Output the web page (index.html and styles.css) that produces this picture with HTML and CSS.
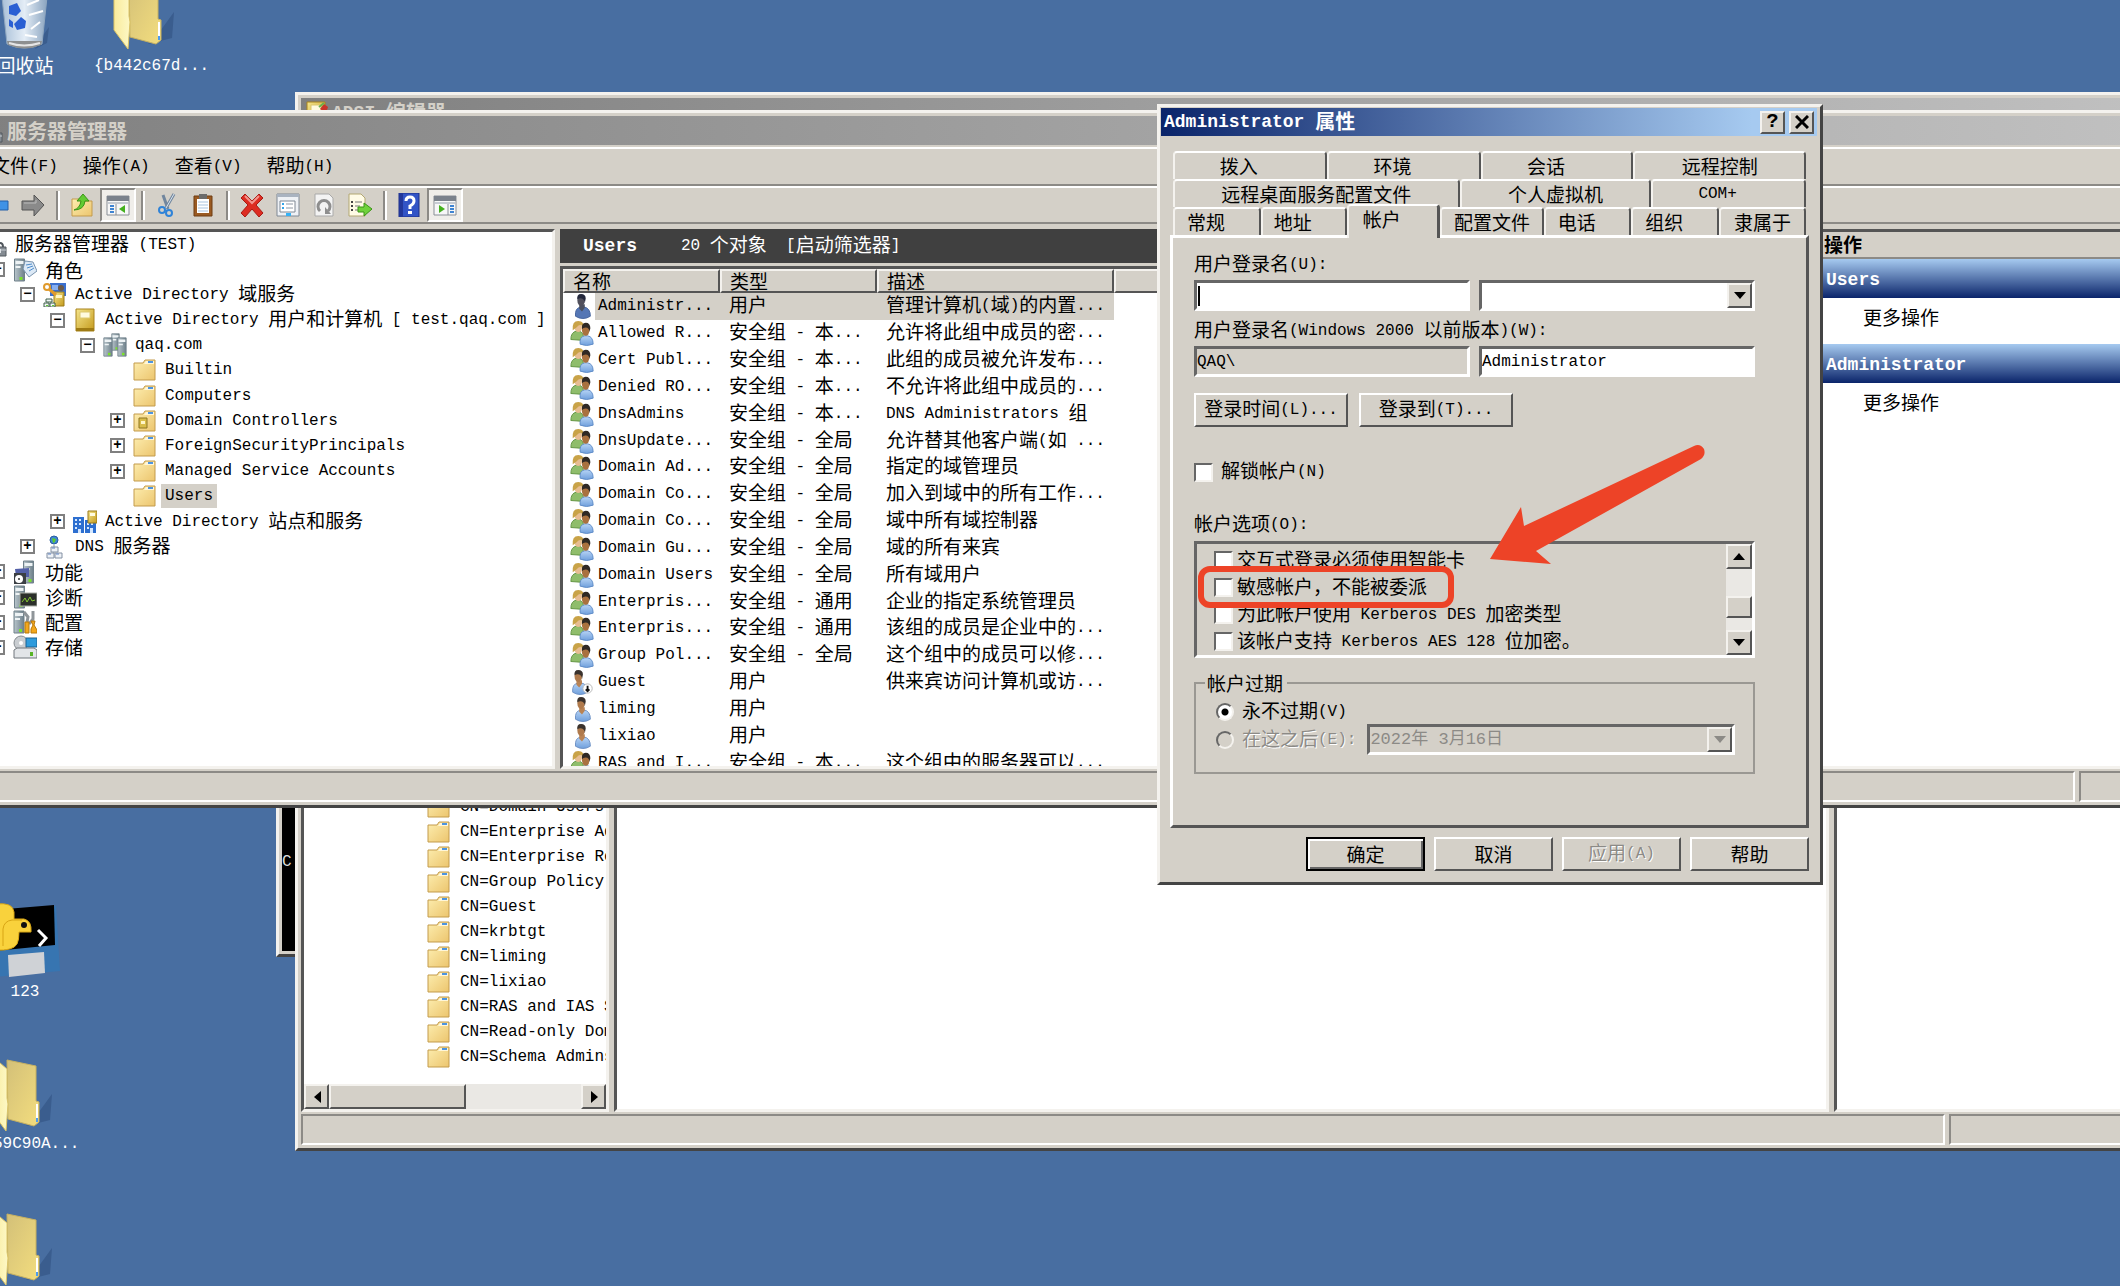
FILE: index.html
```html
<!DOCTYPE html>
<html lang="zh-CN">
<head>
	<meta charset="utf-8">
	<title>服务器管理器</title>
	<link rel="stylesheet" href="styles.css">
</head>
<body>

<!-- shared icons -->
<svg class="sprite" width="0" height="0">
	<defs>
		<linearGradient id="g-folder" x1="0" y1="0" x2="1" y2="1"><stop offset="0" stop-color="#fdeeb0"/><stop offset="1" stop-color="#ecc56e"/></linearGradient>
		<linearGradient id="g-big" x1="0" y1="0" x2="1" y2="0"><stop offset="0" stop-color="#f9eb9c"/><stop offset="1" stop-color="#fdf8c6"/></linearGradient>
		<linearGradient id="g-back" x1="0" y1="0" x2="1" y2="1"><stop offset="0" stop-color="#d3c078"/><stop offset="1" stop-color="#f3dd7e"/></linearGradient>
		<linearGradient id="g-tower" x1="0" y1="0" x2="1" y2="0"><stop offset="0" stop-color="#b9c6cc"/><stop offset="1" stop-color="#6d7f89"/></linearGradient>
		<linearGradient id="g-book" x1="0" y1="0" x2="1" y2="1"><stop offset="0" stop-color="#f5e58c"/><stop offset="1" stop-color="#c49a1c"/></linearGradient>
		<linearGradient id="g-blue" x1="0" y1="0" x2="0" y2="1"><stop offset="0" stop-color="#b7d4f5"/><stop offset="1" stop-color="#6f9fdc"/></linearGradient>
		<linearGradient id="g-glass" x1="0" y1="0" x2="1" y2="0"><stop offset="0" stop-color="#a9c0d8"/><stop offset="0.5" stop-color="#e4edf6"/><stop offset="1" stop-color="#8aa4c0"/></linearGradient>
	</defs>
	<symbol id="folder" viewBox="0 0 24 24">
		<path d="M1 5h9l2-3h10v20H1z" fill="url(#g-folder)" stroke="#c39b4c"/>
		<path d="M11 6l2-3h8v3z" fill="#fff6d8"/><path d="M15 3h5v2h-5z" fill="#4d94e0"/>
	</symbol>
	<symbol id="folder-dc" viewBox="0 0 24 24">
		<use href="#folder"/><path d="M6 9h8v10H6z" fill="#d9bd4a" stroke="#8f7623"/><path d="M8 12h4v3H8z" fill="#fff6c6"/>
	</symbol>
	<symbol id="tower" viewBox="0 0 12 24">
		<path d="M1 1h10v22H1z" fill="url(#g-tower)" stroke="#70818a"/><path d="M2 3h8v3H2zM2 8h5v2H2z" fill="#eef3f5"/><path d="M6 19h3v3H6z" fill="#7be22a"/>
	</symbol>
	<symbol id="manager" viewBox="0 0 24 24">
		<use href="#tower" x="2" y="0" width="12" height="22"/><path d="M14 14q0-4 3-4t3 4" fill="none" stroke="#4f555b" stroke-width="2"/><path d="M9 14h14v9H9z" fill="#848b92" stroke="#53595f"/><path d="M9 17h14" stroke="#c9ced3"/><path d="M15 16h3v4h-3z" fill="#dfe3e6"/>
	</symbol>
	<symbol id="roles" viewBox="0 0 24 24">
		<use href="#tower" x="0" y="0" width="13" height="24"/>
		<path d="M12 3l8 1 4 9-8 6-6-8z" fill="#dce9f6" stroke="#7993ad"/><path d="M13 7l6-1M14 10l6-2M16 13l5-3" stroke="#4d8ccc"/>
	</symbol>
	<symbol id="adds" viewBox="0 0 24 24">
		<path d="M7 0h16v13H7z" fill="#3b70cf"/><path d="M9 2h6v5H9z" fill="#86aef0"/><circle cx="18" cy="5" r="3" fill="#6d5b4a"/>
		<path d="M11 9h10v14H11z" fill="url(#g-book)" stroke="#9b7a19"/><path d="M13 12h6v3h-6z" fill="#fff6c6"/>
		<circle cx="4" cy="4" r="3" fill="none" stroke="#e09a2c" stroke-width="2"/><path d="M6 6l7 6" stroke="#e09a2c" stroke-width="3"/>
		<path d="M3 16h6v3H3zM1 20h5v4H1zM7 20h5v4H7z" fill="#f1f5f5" stroke="#3d5f49"/><path d="M3 22h2v1H3zM9 22h2v1H9z" fill="#5ecb2d"/>
	</symbol>
	<symbol id="book" viewBox="0 0 24 24">
		<path d="M3 1h18v22H3z" fill="url(#g-book)" stroke="#a8831d"/><path d="M3 20h18v3H3z" fill="#9f7b13"/><path d="M7 4h10v6H7z" fill="#fffbe0" stroke="#dcc870"/>
	</symbol>
	<symbol id="adsi" viewBox="0 0 24 24">
		<use href="#book"/><path d="M16 8l4-5 4 3-2 6z" fill="#c9352b"/><path d="M15 6l5-4" stroke="#6ab04c" stroke-width="2"/>
	</symbol>
	<symbol id="domain" viewBox="0 0 24 24">
		<use href="#tower" x="8" y="0" width="9" height="18"/><use href="#tower" x="0" y="4" width="10" height="20"/><use href="#tower" x="14" y="4" width="10" height="20"/>
	</symbol>
	<symbol id="sites" viewBox="0 0 24 24">
		<path d="M0 7h11v16H0zM12 10h11v13H12z" fill="#2d6fd0"/><path d="M2 9h2v2H2zM6 9h2v2H6zM2 13h2v2H2zM6 13h2v2H6zM2 17h2v2H2zM14 13h2v2h-2zM18 13h2v2h-2zM14 17h2v2h-2zM5 19h3v4H5zM17 18h3v5h-3z" fill="#d5e8ff"/>
		<path d="M15 1h9v12h-9z" fill="url(#g-book)" stroke="#9b7a19"/><path d="M17 3h5v3h-5z" fill="#fffbe0"/>
	</symbol>
	<symbol id="dns" viewBox="0 0 24 24">
		<circle cx="11" cy="5" r="4" fill="#3d85d8" stroke="#2b5e9e"/><path d="M9 3l4 1-1 3-2 1z" fill="#5ecb2d"/>
		<path d="M11 10v8" stroke="#8c99a8"/><path d="M8 12h7v5H8zM4 18h7v5H4zM12 18h7v5h-7z" fill="#eef1f6" stroke="#8390a3"/><path d="M9 13h3M5 19h3M13 19h3" stroke="#5d83c0"/>
	</symbol>
	<symbol id="features" viewBox="0 0 24 24">
		<use href="#tower" x="9" y="0" width="13" height="24"/><path d="M2 9l14-1v9H3z" fill="#5360a8"/><path d="M1 13h12v11H1z" fill="#3b3f44"/><circle cx="6" cy="19" r="4" fill="#fff"/><circle cx="6" cy="19" r="1" fill="#333"/>
	</symbol>
	<symbol id="diag" viewBox="0 0 24 24">
		<use href="#tower" x="0" y="0" width="13" height="24"/><path d="M7 8h17v13H7z" fill="#2b2f2a" stroke="#a9aea6"/><path d="M9 17l3-4 2 4 3-5 2 4 3-1" fill="none" stroke="#83c632"/>
	</symbol>
	<symbol id="config" viewBox="0 0 24 24">
		<use href="#tower" x="0" y="0" width="12" height="24"/><path d="M11 2l4 5-1 5M20 1v8l-4 5" fill="none" stroke="#8f9599" stroke-width="3"/><path d="M12 12h4v11h-4zM18 11h4l-1 4 3 5v3h-6v-4l2-4z" fill="#f3a71c" stroke="#b87808"/>
	</symbol>
	<symbol id="storage" viewBox="0 0 24 24">
		<circle cx="8" cy="8" r="7" fill="#c9cdd1" stroke="#868b90"/><circle cx="8" cy="8" r="2" fill="#fff"/><path d="M13 3h11v9H13z" fill="#2e9bdc" stroke="#1b6292"/><path d="M1 15l3-2h17l3 2v8H1z" fill="#e2e5e8" stroke="#71777c"/><path d="M17 17h3v4h-3z" fill="#58b525"/>
	</symbol>
	<symbol id="user" viewBox="0 0 24 28">
		<path d="M5 25q-1-9 6-10h3q7 1 7 10-8 5-16 0z" fill="url(#g-blue)" stroke="#6b8fc4"/><path d="M9 12h6v4l-3 4-3-3z" fill="#b98354"/><ellipse cx="11" cy="8" rx="4" ry="6" fill="#b07a4c"/><path d="M7 7q-1-6 4-6t5 5l-1 5q0-4-3-5-3-1-5 1z" fill="#3a322d"/>
	</symbol>
	<symbol id="user-sel" viewBox="0 0 24 28">
		<path d="M5 25q-1-9 6-10h3q7 1 7 10-8 5-16 0z" fill="#5577b5" stroke="#43629c"/><path d="M9 12h6v4l-3 4-3-3z" fill="#4b505f"/><ellipse cx="11" cy="8" rx="4" ry="6" fill="#51505c"/><path d="M7 7q-1-6 4-6t5 5l-1 5q0-4-3-5-3-1-5 1z" fill="#23283c"/>
	</symbol>
	<symbol id="guest" viewBox="0 0 24 28">
		<use href="#user" x="-3" width="24" height="28"/><circle cx="18" cy="21" r="5" fill="#fff" stroke="#b5b5b5"/><path d="M18 18v6M16 22l2 2 2-2" fill="none" stroke="#111" stroke-width="2"/>
	</symbol>
	<symbol id="group" viewBox="0 0 24 28">
		<path d="M0 21q0-8 6-9h3q5 1 5 10z" fill="#8fbd6b" stroke="#5f9240"/><ellipse cx="8" cy="8" rx="4" ry="5" fill="#e7bd92"/><path d="M2 11Q1 1 8 1t6 9l-3-5q-3 0-5 3z" fill="#c9a348"/>
		<path d="M10 26q-1-8 5-9h3q6 1 6 9-7 3-14 0z" fill="url(#g-blue)" stroke="#5f8bc7"/><ellipse cx="16" cy="11" rx="4" ry="6" fill="#a9713f"/><path d="M12 10q-1-7 4-7t5 6l-1 4q0-5-4-5-3 0-4 2z" fill="#2f2925"/>
	</symbol>
	<symbol id="bigfolder" viewBox="7 0 60 76">
		<path d="M43 60l16-22-2 26-24 6z" fill="#2c4b7c" opacity="0.5"/>
		<path d="M14 4l29 6v35l3 1v20l-5 4-26-7z" fill="url(#g-back)" stroke="#c7b161"/><path d="M43 48h2v18h-2z" fill="#fff"/><path d="M43 62h2v4h-2z" fill="#4c9bf0"/>
		<path d="M-1 0l15 13v29l1 6-2 27-14-19z" fill="url(#g-big)" stroke="#dcc466"/>
	</symbol>
	<symbol id="pane-left" viewBox="0 0 24 24">
		<path d="M1 3h22v19H1z" fill="#f7f7f7" stroke="#8a8f96"/><path d="M1 3h22v5H1z" fill="#7b828c"/><path d="M2 9h20v2H2z" fill="#c7ccd3"/><path d="M10 11v11" stroke="#8a8f96"/><path d="M4 13h4M4 16h4M4 19h4" stroke="#3f84d2" stroke-width="2"/><path d="M19 12v8l-6-4z" fill="#44b01e"/>
	</symbol>
	<symbol id="pane-right" viewBox="0 0 24 24">
		<path d="M1 3h22v19H1z" fill="#f7f7f7" stroke="#8a8f96"/><path d="M1 3h22v5H1z" fill="#7b828c"/><path d="M2 9h20v2H2z" fill="#c7ccd3"/><path d="M15 11v11" stroke="#8a8f96"/><path d="M17 13h4M17 16h4M17 19h4" stroke="#3f84d2" stroke-width="2"/><path d="M6 12v8l6-4z" fill="#44b01e"/>
	</symbol>
</svg>

<div class="desktop">

	<!-- desktop icons -->
	<div class="shortcut bin">
		<svg width="60" height="56" viewBox="0 0 60 56">
			<path d="M44 44l10-14-2 16-12 6z" fill="#2c4b7c" opacity="0.5"/>
			<path d="M7 0h45l-5 47q-18 8-35 0z" fill="url(#g-glass)" stroke="#8ea6bf"/>
			<path d="M12 44h35l-1 4q-16 7-33 0z" fill="#8d8f90"/><path d="M14 46q15 5 31 0" stroke="#e5e5e5" fill="none" stroke-width="2"/>
			<path d="M14 9l8-3 4 8-5 5-7-2zM26 20l5 4-1 7-8 2-3-6zM14 22l4 3v6l-4-2z" fill="#2a5fd3"/>
			<path d="M32 8l12-5M34 18l14-4M36 32l9-7M30 38l12 2" stroke="#fff" stroke-width="2"/>
		</svg>
		<span class="zh">回收站</span>
	</div>
	<div class="shortcut top-folder">
		<svg width="60" height="76"><use href="#bigfolder"/></svg>
		<span>{b442c67d...</span>
	</div>
	<div class="shortcut python">
		<svg width="74" height="78" viewBox="0 0 74 78">
			<path d="M6 8l62-4 4 65-66 6z" fill="#3775b1"/><path d="M6 8l60-5 1 40-61 6z" fill="#000"/>
			<path d="M50 28l8 8-7 8" fill="none" stroke="#fff" stroke-width="3"/>
			<path d="M8 2q17-2 18 8v7h10q8 2 7 13H31q0 8-2 12-4 7-21 6z" fill="#f9d23c" stroke="#d8a514"/><path d="M15 44V27q1-8 9-9h10" fill="none" stroke="#d8a514"/><circle cx="36" cy="23" r="3" fill="#111"/>
			<path d="M20 53l36-3 1 21-36 4z" fill="#cfd2d6"/>
		</svg>
		<span>123</span>
	</div>
	<div class="shortcut folder-a">
		<svg width="60" height="76"><use href="#bigfolder"/></svg>
		<span>59C90A...</span>
	</div>
	<div class="shortcut folder-b">
		<svg width="60" height="76"><use href="#bigfolder"/></svg>
	</div>

	<!-- console -->
	<div class="window console"><div class="screen">C</div></div>

	<!-- ADSI editor -->
	<div class="window adsi">
		<div class="titlebar">
			<svg class="icon"><use href="#adsi"/></svg>
			<span>ADSI <span class="zh">编辑器</span></span>
		</div>
		<div class="panes">
			<div class="pane cn-pane">
				<ul class="cn-list">
					<li><svg class="icon"><use href="#folder"/></svg>CN=Domain Users</li>
					<li><svg class="icon"><use href="#folder"/></svg>CN=Enterprise Admins</li>
					<li><svg class="icon"><use href="#folder"/></svg>CN=Enterprise Read-only</li>
					<li><svg class="icon"><use href="#folder"/></svg>CN=Group Policy Creator</li>
					<li><svg class="icon"><use href="#folder"/></svg>CN=Guest</li>
					<li><svg class="icon"><use href="#folder"/></svg>CN=krbtgt</li>
					<li><svg class="icon"><use href="#folder"/></svg>CN=liming</li>
					<li><svg class="icon"><use href="#folder"/></svg>CN=lixiao</li>
					<li><svg class="icon"><use href="#folder"/></svg>CN=RAS and IAS Servers</li>
					<li><svg class="icon"><use href="#folder"/></svg>CN=Read-only Domain</li>
					<li><svg class="icon"><use href="#folder"/></svg>CN=Schema Admins</li>
				</ul>
				<div class="hscroll">
					<button class="sbtn" aria-label="left"><svg width="10" height="12"><path d="M9 0v12L2 6z"/></svg></button>
					<div class="thumb"></div>
					<button class="sbtn" aria-label="right"><svg width="10" height="12"><path d="M2 0v12l7-6z"/></svg></button>
				</div>
			</div>
			<div class="pane grow"></div>
			<div class="pane adsi-actions"></div>
		</div>
		<div class="statusbar"><div class="cell grow"></div><div class="cell adsi-cell"></div></div>
	</div>

	<!-- server manager -->
	<div class="window manager">
		<div class="titlebar">
			<svg class="icon"><use href="#manager"/></svg>
			<span class="zh">服务器管理器</span>
		</div>
		<div class="menubar">
			<button><span class="zh">文件</span>(F)</button>
			<button><span class="zh">操作</span>(A)</button>
			<button><span class="zh">查看</span>(V)</button>
			<button><span class="zh">帮助</span>(H)</button>
		</div>
		<div class="toolbar">
			<button class="tool" aria-label="后退"><svg class="icon" viewBox="0 0 24 24"><path d="M1 12L12 3v5h11v9H12v5z" fill="#3f92e6" stroke="#225fa8"/></svg></button>
			<button class="tool" aria-label="前进"><svg class="icon" viewBox="0 0 24 24"><path d="M23 12L13 2v6H1v9h12v6z" fill="#8a8a8a" stroke="#555"/><path d="M3 10h12V7" stroke="#bbb" fill="none"/></svg></button>
			<i class="sep"></i>
			<button class="tool" aria-label="上移"><svg class="icon" viewBox="0 0 24 24"><path d="M2 6h8l2 2h10v15H2z" fill="url(#g-folder)" stroke="#c39b4c"/><path d="M4 17q6-2 7-9H7l6-7 6 7h-4q-1 9-11 9z" fill="#62cb33" stroke="#3b9417"/></svg></button>
			<button class="tool on" aria-label="控制台树"><svg class="icon"><use href="#pane-left"/></svg></button>
			<i class="sep"></i>
			<button class="tool" aria-label="剪切"><svg class="icon" viewBox="0 0 24 24"><path d="M8 2l5 14M19 1l-8 14" stroke="#71869e" stroke-width="3"/><path d="M19 1l-8 14" stroke="#dbe5ef"/><circle cx="7" cy="17" r="3" fill="none" stroke="#2f83d8" stroke-width="2"/><circle cx="14" cy="20" r="3" fill="none" stroke="#2f83d8" stroke-width="2"/></svg></button>
			<button class="tool" aria-label="粘贴"><svg class="icon" viewBox="0 0 24 24"><path d="M3 3h18v20H3z" fill="#9a5a22" stroke="#6e3c12"/><path d="M6 6h12v14H6z" fill="#fff"/><path d="M7 9h10M7 12h10M7 15h10M7 18h10" stroke="#a9c3de"/><path d="M8 1h8v5H8z" fill="#6b6b6b"/></svg></button>
			<i class="sep"></i>
			<button class="tool" aria-label="删除"><svg class="icon" viewBox="0 0 24 24"><path d="M5 1l7 7 7-7 4 4-7 7 7 8-4 4-7-8-7 8-4-4 7-8-7-7z" fill="#dd2c22" stroke="#a81b14"/><path d="M5 3l7 7 7-7" stroke="#f2968e" fill="none" stroke-width="2"/></svg></button>
			<button class="tool" aria-label="属性"><svg class="icon" viewBox="0 0 24 24"><path d="M1 1h22v22H1z" fill="#eef1f5" stroke="#7f8894"/><path d="M1 1h22v3H1z" fill="#a9b3c0"/><path d="M4 8h15v11H4z" fill="#fff" stroke="#7f8894"/><path d="M6 11h2M6 15h2" stroke="#35a5e8" stroke-width="2"/><path d="M10 11h7M10 15h7" stroke="#8e97a3"/><path d="M10 20h5v3h-5z" fill="#35b2f5"/></svg></button>
			<button class="tool" aria-label="刷新"><svg class="icon" viewBox="0 0 24 24"><path d="M3 1h14l4 4v18H3z" fill="#f3f3f3" stroke="#a9a9a9"/><path d="M8 18a6 6 0 1 1 8 0" fill="none" stroke="#8e8e8e" stroke-width="3"/><path d="M13 14v7h6z" fill="#8e8e8e"/></svg></button>
			<button class="tool" aria-label="导出"><svg class="icon" viewBox="0 0 24 24"><path d="M1 1h12l4 4v18H1z" fill="#fffbe6" stroke="#b3a872"/><path d="M3 9h2M3 13h2M3 17h2" stroke="#444" stroke-width="2"/><path d="M7 9h7M7 13h5M7 17h5" stroke="#777"/><path d="M10 14h6v-4l8 6-8 7v-4h-6z" fill="#6fd23c" stroke="#3b9417"/></svg></button>
			<i class="sep"></i>
			<button class="tool" aria-label="帮助"><svg class="icon" viewBox="0 0 24 24"><path d="M2 0h20v24H2z" fill="#3254c6" stroke="#1c2f86"/><path d="M2 0h4v24H2z" fill="#22379a"/><path d="M9 8q0-4 4-4t4 4q0 3-4 5v3" fill="none" stroke="#fff" stroke-width="3"/><path d="M11 18h4v3h-4z" fill="#fff"/></svg></button>
			<button class="tool on" aria-label="操作窗格"><svg class="icon"><use href="#pane-right"/></svg></button>
		</div>

		<div class="panes">
			<div class="pane tree-pane">
				<ul class="tree">
					<li class="l0"><svg class="icon"><use href="#manager"/></svg><span><span class="zh">服务器管理器</span> (TEST)</span></li>
					<li class="l1"><i class="box">−</i><svg class="icon"><use href="#roles"/></svg><span class="zh">角色</span></li>
					<li class="l2"><i class="box">−</i><svg class="icon"><use href="#adds"/></svg><span>Active Directory <span class="zh">域服务</span></span></li>
					<li class="l3"><i class="box">−</i><svg class="icon"><use href="#book"/></svg><span>Active Directory <span class="zh">用户和计算机</span> [ test.qaq.com ]</span></li>
					<li class="l4"><i class="box">−</i><svg class="icon"><use href="#domain"/></svg><span>qaq.com</span></li>
					<li class="l5"><i class="box none"></i><svg class="icon"><use href="#folder"/></svg><span>Builtin</span></li>
					<li class="l5"><i class="box none"></i><svg class="icon"><use href="#folder"/></svg><span>Computers</span></li>
					<li class="l5"><i class="box">+</i><svg class="icon"><use href="#folder-dc"/></svg><span>Domain Controllers</span></li>
					<li class="l5"><i class="box">+</i><svg class="icon"><use href="#folder"/></svg><span>ForeignSecurityPrincipals</span></li>
					<li class="l5"><i class="box">+</i><svg class="icon"><use href="#folder"/></svg><span>Managed Service Accounts</span></li>
					<li class="l5"><i class="box none"></i><svg class="icon"><use href="#folder"/></svg><span class="picked">Users</span></li>
					<li class="l3"><i class="box">+</i><svg class="icon"><use href="#sites"/></svg><span>Active Directory <span class="zh">站点和服务</span></span></li>
					<li class="l2"><i class="box">+</i><svg class="icon"><use href="#dns"/></svg><span>DNS <span class="zh">服务器</span></span></li>
					<li class="l1"><i class="box">+</i><svg class="icon"><use href="#features"/></svg><span class="zh">功能</span></li>
					<li class="l1"><i class="box">+</i><svg class="icon"><use href="#diag"/></svg><span class="zh">诊断</span></li>
					<li class="l1"><i class="box">+</i><svg class="icon"><use href="#config"/></svg><span class="zh">配置</span></li>
					<li class="l1"><i class="box">+</i><svg class="icon"><use href="#storage"/></svg><span class="zh">存储</span></li>
				</ul>
			</div>

			<div class="middle">
				<div class="banner"><b>Users</b><span>20 <span class="zh">个对象</span>&nbsp; [<span class="zh">启动筛选器</span>]</span></div>
				<div class="pane list-pane">
					<table class="list">
						<thead><tr><th class="zh">名称</th><th class="zh">类型</th><th class="zh">描述</th><th></th></tr></thead>
						<tbody>
							<tr class="sel"><td><svg class="icon"><use href="#user-sel"/></svg><span>Administr...</span></td><td><span class="zh">用户</span></td><td><span class="zh">管理计算机</span>(<span class="zh">域</span>)<span class="zh">的内置</span>...</td><td></td></tr>
							<tr><td><svg class="icon"><use href="#group"/></svg>Allowed R...</td><td><span class="zh">安全组</span> - <span class="zh">本</span>...</td><td><span class="zh">允许将此组中成员的密</span>...</td><td></td></tr>
							<tr><td><svg class="icon"><use href="#group"/></svg>Cert Publ...</td><td><span class="zh">安全组</span> - <span class="zh">本</span>...</td><td><span class="zh">此组的成员被允许发布</span>...</td><td></td></tr>
							<tr><td><svg class="icon"><use href="#group"/></svg>Denied RO...</td><td><span class="zh">安全组</span> - <span class="zh">本</span>...</td><td><span class="zh">不允许将此组中成员的</span>...</td><td></td></tr>
							<tr><td><svg class="icon"><use href="#group"/></svg>DnsAdmins</td><td><span class="zh">安全组</span> - <span class="zh">本</span>...</td><td>DNS Administrators <span class="zh">组</span></td><td></td></tr>
							<tr><td><svg class="icon"><use href="#group"/></svg>DnsUpdate...</td><td><span class="zh">安全组</span> - <span class="zh">全局</span></td><td><span class="zh">允许替其他客户端</span>(<span class="zh">如</span> ...</td><td></td></tr>
							<tr><td><svg class="icon"><use href="#group"/></svg>Domain Ad...</td><td><span class="zh">安全组</span> - <span class="zh">全局</span></td><td><span class="zh">指定的域管理员</span></td><td></td></tr>
							<tr><td><svg class="icon"><use href="#group"/></svg>Domain Co...</td><td><span class="zh">安全组</span> - <span class="zh">全局</span></td><td><span class="zh">加入到域中的所有工作</span>...</td><td></td></tr>
							<tr><td><svg class="icon"><use href="#group"/></svg>Domain Co...</td><td><span class="zh">安全组</span> - <span class="zh">全局</span></td><td><span class="zh">域中所有域控制器</span></td><td></td></tr>
							<tr><td><svg class="icon"><use href="#group"/></svg>Domain Gu...</td><td><span class="zh">安全组</span> - <span class="zh">全局</span></td><td><span class="zh">域的所有来宾</span></td><td></td></tr>
							<tr><td><svg class="icon"><use href="#group"/></svg>Domain Users</td><td><span class="zh">安全组</span> - <span class="zh">全局</span></td><td><span class="zh">所有域用户</span></td><td></td></tr>
							<tr><td><svg class="icon"><use href="#group"/></svg>Enterpris...</td><td><span class="zh">安全组</span> - <span class="zh">通用</span></td><td><span class="zh">企业的指定系统管理员</span></td><td></td></tr>
							<tr><td><svg class="icon"><use href="#group"/></svg>Enterpris...</td><td><span class="zh">安全组</span> - <span class="zh">通用</span></td><td><span class="zh">该组的成员是企业中的</span>...</td><td></td></tr>
							<tr><td><svg class="icon"><use href="#group"/></svg>Group Pol...</td><td><span class="zh">安全组</span> - <span class="zh">全局</span></td><td><span class="zh">这个组中的成员可以修</span>...</td><td></td></tr>
							<tr><td><svg class="icon"><use href="#guest"/></svg>Guest</td><td><span class="zh">用户</span></td><td><span class="zh">供来宾访问计算机或访</span>...</td><td></td></tr>
							<tr><td><svg class="icon"><use href="#user"/></svg>liming</td><td><span class="zh">用户</span></td><td></td><td></td></tr>
							<tr><td><svg class="icon"><use href="#user"/></svg>lixiao</td><td><span class="zh">用户</span></td><td></td><td></td></tr>
							<tr><td><svg class="icon"><use href="#group"/></svg>RAS and I...</td><td><span class="zh">安全组</span> - <span class="zh">本</span>...</td><td><span class="zh">这个组中的服务器可以</span>...</td><td></td></tr>
						</tbody>
					</table>
				</div>
			</div>

			<div class="pane actions">
				<div class="actions-head zh">操作</div>
				<div class="band">Users</div>
				<a class="more zh" href="#">更多操作</a>
				<div class="band">Administrator</div>
				<a class="more zh" href="#">更多操作</a>
			</div>
		</div>
		<div class="statusbar"><div class="cell grow"></div><div class="cell manager-cell"></div></div>
	</div>

	<!-- account properties -->
	<form class="window dialog">
		<div class="titlebar active">
			<span class="caption">Administrator <span class="zh">属性</span></span>
			<button type="button" class="cap">?</button>
			<button type="button" class="cap" aria-label="关闭"><svg width="14" height="14"><path d="M1 1l12 12M13 1L1 13" stroke="#000" stroke-width="3"/></svg></button>
		</div>
		<div class="tabs">
			<div class="tabrow row1">
				<button type="button" class="tab short">拨入</button>
				<button type="button" class="tab short">环境</button>
				<button type="button" class="tab short">会话</button>
				<button type="button" class="tab">远程控制</button>
			</div>
			<div class="tabrow row2">
				<button type="button" class="tab">远程桌面服务配置文件</button>
				<button type="button" class="tab">个人虚拟机</button>
				<button type="button" class="tab short latin">COM+</button>
			</div>
			<div class="tabrow row3">
				<button type="button" class="tab short">常规</button>
				<button type="button" class="tab short">地址</button>
				<button type="button" class="tab short current">帐户</button>
				<button type="button" class="tab">配置文件</button>
				<button type="button" class="tab short">电话</button>
				<button type="button" class="tab short">组织</button>
				<button type="button" class="tab">隶属于</button>
			</div>
		</div>
		<div class="page">
			<label for="logon"><span class="zh">用户登录名</span>(U):</label>
			<div class="fields">
				<div class="field"><i class="caret"></i><input id="logon" type="text"></div>
				<div class="field"><select aria-label="域后缀"><option></option></select><span class="drop"><svg width="12" height="7"><path d="M0 0h12L6 7z"/></svg></span></div>
			</div>
			<label for="old"><span class="zh">用户登录名</span>(Windows 2000 <span class="zh">以前版本</span>)(W):</label>
			<div class="fields">
				<div class="field off"><input type="text" value="QAQ\" readonly aria-label="域"></div>
				<div class="field"><input id="old" type="text" value="Administrator"></div>
			</div>
			<div class="btns">
				<button type="button" class="btn wide"><span class="zh">登录时间</span>(L)...</button>
				<button type="button" class="btn wide"><span class="zh">登录到</span>(T)...</button>
			</div>
			<label class="check unlock"><input type="checkbox"><span><span class="zh">解锁帐户</span>(N)</span></label>
			<div class="opt-title"><span class="zh">帐户选项</span>(O):</div>
			<div class="options">
				<div class="optlist">
					<label class="check"><input type="checkbox"><span><span class="zh">交互式登录必须使用智能卡</span></span></label>
					<label class="check"><input type="checkbox"><span><span class="zh">敏感帐户，不能被委派</span></span></label>
					<label class="check"><input type="checkbox"><span><span class="zh">为此帐户使用</span> Kerberos DES <span class="zh">加密类型</span></span></label>
					<label class="check"><input type="checkbox"><span><span class="zh">该帐户支持</span> Kerberos AES 128 <span class="zh">位加密。</span></span></label>
				</div>
				<div class="vscroll">
					<button type="button" class="sbtn" aria-label="up"><svg width="12" height="7"><path d="M0 7h12L6 0z"/></svg></button>
					<div class="thumb"></div>
					<button type="button" class="sbtn" aria-label="down"><svg width="12" height="7"><path d="M0 0h12L6 7z"/></svg></button>
				</div>
			</div>
			<fieldset>
				<legend class="zh">帐户过期</legend>
				<label class="check"><input type="radio" name="expire" checked><span><span class="zh">永不过期</span>(V)</span></label>
				<div class="after">
					<label class="check dim"><input type="radio" name="expire" disabled><span><span class="zh">在这之后</span>(E):</span></label>
					<div class="field off"><select disabled aria-label="日期"><option>2022年 3月16日</option></select><span class="drop dim-arrow"><svg width="12" height="7"><path d="M0 0h12L6 7z"/></svg></span></div>
				</div>
			</fieldset>
		</div>
		<div class="footer">
			<button type="button" class="btn default zh">确定</button>
			<button type="button" class="btn zh">取消</button>
			<button type="button" class="btn" disabled><span class="zh">应用</span>(A)</button>
			<button type="button" class="btn zh">帮助</button>
		</div>
		<svg class="mark" width="530" height="180" viewBox="0 0 530 180">
			<rect x="11" y="129" width="250" height="36" rx="9" fill="none" stroke="#ed4327" stroke-width="6"/>
			<path d="M300 119L331 67l3 19L504 6q6-3 10 3 2 6-3 10L346 111l15 13z" fill="#ed4327"/>
		</svg>
	</form>
</div>

</body>
</html>
```

FILE: styles.css
```css
* {
	box-sizing: border-box;
}
body {
	margin: 0;
	font: 16px/24px "Liberation Mono", "Noto Sans CJK SC", monospace;
	color: #000;
}
button, input, select {
	font: inherit;
	color: inherit;
	margin: 0;
	padding: 0;
	border: 0;
	border-radius: 0;
	background: none;
}
ul {
	list-style: none;
	margin: 0;
	padding: 0;
}
i {
	font-style: normal;
}
.zh {
	font-family: "Noto Sans CJK SC", sans-serif;
	font-size: 19px;
	line-height: 24px;
}
/* chinese runs inside a latin line must not make the line taller */
span > .zh, label > .zh, button > .zh, td > .zh, .opt-title > .zh {
	line-height: 0;
	vertical-align: -2px;
}
.sprite {
	position: absolute;
}
.icon {
	width: 24px;
	height: 24px;
	flex: none;
}
.grow {
	flex: 1;
}
.desktop {
	position: relative;
	height: 100vh;
	overflow: hidden;
	background: #486ea1;
}

/* desktop shortcuts */
.shortcut {
	position: absolute;
	display: flex;
	flex-direction: column;
	align-items: center;
	color: #fff;
	white-space: nowrap;
}
.shortcut svg, #bigfolder {
	overflow: visible;
}
.bin { left: -5px; top: -3px; }
.top-folder { left: 94px; top: -26px; }
.python { left: -12px; top: 902px; }
.folder-a {
	left: -7px;
	top: 1056px;
	align-items: flex-start;
}
.folder-a svg { margin-left: 7px; }
.folder-b { left: 0; top: 1210px; }
.top-folder span { margin-top: 4px; }

/* windows */
.window {
	position: absolute;
	display: flex;
	flex-direction: column;
	padding: 3px;
	border: 3px solid;
	border-color: #f4f2ee #444 #444 #f4f2ee;
	background: #d4d0c8;
}
.console {
	left: 276px;
	top: 600px;
	width: 300px;
	height: 357px;
}
.screen {
	flex: 1;
	background: #000;
	color: #ddd;
	padding-top: 244px;
}
.adsi {
	left: 295px;
	right: -20px;
	top: 92px;
	height: 1059px;
}
.manager {
	left: -27px;
	right: -20px;
	top: 110px;
	height: 698px;
}
.titlebar {
	display: flex;
	align-items: center;
	flex: none;
	height: 29px;
	gap: 4px;
	padding-left: 3px;
	background: linear-gradient(90deg, #808080, #c0c0c0);
	color: #d4d0c8;
	font-weight: bold;
	font-size: 18px;
}
.manager .titlebar {
	padding-left: 0;
}
.titlebar .zh {
	font-size: 20px;
}
.panes {
	display: flex;
	flex: 1;
	min-height: 0;
	gap: 5px;
}
.pane {
	background: #fff;
	border: 3px solid;
	border-color: #555 #f4f2ee #f4f2ee #555;
	overflow: hidden;
}
.statusbar {
	display: flex;
	flex: none;
	gap: 4px;
	height: 31px;
	margin-top: 2px;
}
.cell {
	border: 2px solid;
	border-color: #8c8a86 #fff #fff #8c8a86;
}
.adsi-cell { width: 185px; }
.manager-cell { width: 55px; }

/* ADSI editor */
.cn-pane {
	display: flex;
	flex-direction: column;
	justify-content: flex-end;
	width: 308px;
}
.cn-list {
	margin-bottom: 15px;
	padding-left: 123px;
	white-space: nowrap;
}
.cn-list li {
	display: flex;
	align-items: center;
	gap: 9px;
	height: 25px;
}
.adsi-actions { width: 300px; }
.hscroll, .vscroll {
	display: flex;
	background: #eae8e4;
}
.sbtn, .thumb, .drop {
	display: flex;
	align-items: center;
	justify-content: center;
	flex: none;
	background: #d4d0c8;
	border: 2px solid;
	border-color: #f4f2ee #555 #555 #f4f2ee;
}
.hscroll {
	height: 25px;
	flex: none;
}
.hscroll .sbtn { width: 25px; }
.hscroll .thumb {
	width: 137px;
	margin-right: auto;
}

/* server manager */
.menubar {
	display: flex;
	height: 39px;
	margin-top: 2px;
	padding-left: 12px;
	gap: 25px;
	border-top: 2px solid #fff;
	border-bottom: 2px solid #8c8a86;
}
.menubar button {
	white-space: nowrap;
}
.toolbar {
	display: flex;
	align-items: center;
	height: 38px;
	margin-bottom: 5px;
	border-top: 2px solid #fff;
	border-bottom: 2px solid #8c8a86;
}
.tool {
	display: flex;
	align-items: center;
	justify-content: center;
	flex: none;
	width: 36px;
	height: 34px;
}
.tool.on {
	background: #f0eeea;
	border: 2px solid;
	border-color: #8c8a86 #fff #fff #8c8a86;
}
.sep {
	width: 4px;
	height: 29px;
	margin: 0 4px 0 5px;
	border-left: 2px solid #8c8a86;
	border-right: 2px solid #fff;
}
.tree-pane {
	width: 576px;
}
.tree {
	display: grid;
	grid-auto-rows: 1fr;
	height: 428px;
	white-space: nowrap;
}
.tree li {
	display: flex;
	align-items: center;
	gap: 8px;
}
.l0 { padding-left: 1px; }
.l1 { padding-left: 8px; }
.l2 { padding-left: 38px; }
.l3 { padding-left: 68px; }
.l4 { padding-left: 98px; }
.l5 { padding-left: 128px; }
.box {
	width: 15px;
	height: 15px;
	border: 2px solid #808080;
	font: bold 14px/11px "Liberation Mono", monospace;
	text-align: center;
}
.box.none {
	visibility: hidden;
}
.picked {
	background: #d4d0c8;
	padding: 0 4px;
	margin-left: -4px;
}
.middle {
	display: flex;
	flex-direction: column;
	flex: 1;
	min-width: 0;
}
.banner {
	display: flex;
	align-items: center;
	gap: 44px;
	height: 34px;
	margin-bottom: 3px;
	padding-left: 23px;
	background: #404040;
	color: #fff;
}
.banner b {
	font-size: 18px;
}
.list-pane {
	flex: 1;
	min-height: 0;
}
.list {
	width: 100%;
	height: 507px;
	table-layout: fixed;
	border-collapse: separate;
	border-spacing: 0;
	white-space: nowrap;
}
.list th {
	height: 24px;
	padding: 0 0 0 8px;
	text-align: left;
	font-weight: normal;
	line-height: 20px;
	background: #d4d0c8;
	border: 2px solid;
	border-color: #f4f2ee #555 #555 #f4f2ee;
}
.list th:nth-child(1) { width: 157px; }
.list th:nth-child(2) { width: 157px; }
.list th:nth-child(3) { width: 237px; }
.list td {
	padding: 0 0 0 9px;
	line-height: 20px;
}
.list td:first-child {
	padding-left: 7px;
}
.list .icon {
	height: 26px;
	margin-right: 4px;
	vertical-align: middle;
}
.sel td {
	background: #d4d0c8;
}
.sel td:first-child {
	background: linear-gradient(90deg, #fff 32px, #d4d0c8 32px);
}
.sel td:last-child {
	background: none;
}
.actions {
	width: 321px;
}
.actions-head {
	height: 27px;
	padding-left: 8px;
	font-weight: bold;
	background: #d4d0c8;
	border-bottom: 2px solid #8c8a86;
}
.band {
	height: 39px;
	padding-left: 10px;
	background: linear-gradient(#a6caf0, #0a246a);
	color: #fff;
	font-weight: bold;
	font-size: 18px;
	line-height: 42px;
}
.more {
	display: block;
	height: 46px;
	padding-left: 47px;
	line-height: 38px;
	color: #000;
	text-decoration: none;
}

/* properties dialog */
.dialog {
	left: 1157px;
	top: 104px;
	width: 666px;
	padding: 1px 3px 11px 1px;
}
.titlebar.active {
	height: 28px;
	padding-right: 3px;
	background: linear-gradient(90deg, #0a246a, #a6caf0 90%);
	color: #fff;
}
.caption {
	flex: 1;
}
.cap {
	display: flex;
	align-items: center;
	justify-content: center;
	width: 25px;
	height: 23px;
	background: #d4d0c8;
	border: 2px solid;
	border-color: #f4f2ee #555 #555 #f4f2ee;
	color: #000;
	font-weight: bold;
	font-size: 20px;
}
.tabs {
	margin: 15px 11px 0 12px;
}
.tabrow {
	display: grid;
	height: 28px;
}
.row1 { grid-template-columns: 154fr 154fr 153fr 173fr; }
.row2 { grid-template-columns: 287fr 192fr 155fr; }
.row3 { grid-template-columns: 88fr 86fr 93fr 105fr 87fr 88fr 87fr; }
.tab {
	border: 2px solid;
	border-color: #fff #555 transparent #f4f2ee;
	border-bottom: 0;
	border-radius: 4px 4px 0 0;
	font: 19px/24px "Noto Sans CJK SC", sans-serif;
	white-space: nowrap;
}
.tab.short {
	padding-right: 22px;
}
.tab.latin {
	font: 16px/24px "Liberation Mono", monospace;
}
.tab.current {
	position: relative;
	z-index: 1;
	margin: -3px 0 -3px;
	padding-bottom: 6px;
	border-right-width: 3px;
	background: #d4d0c8;
}
.page {
	display: flex;
	flex-direction: column;
	height: 593px;
	margin: 0 8px 0 9px;
	padding: 15px 51px 0 21px;
	border: 3px solid;
	border-color: #fff #555 #555 #fff;
}
.page > label {
	margin-bottom: 3px;
}
.fields {
	display: grid;
	grid-template-columns: 1fr 1fr;
	gap: 9px;
	margin-bottom: 8px;
}
.field {
	display: flex;
	align-items: center;
	height: 31px;
	min-width: 0;
	background: #fff;
	border: 3px solid;
	border-color: #666 #fff #fff #666;
}
.field.off {
	background: #d4d0c8;
}
.field input, .field select {
	flex: 1;
	min-width: 0;
	height: 24px;
	appearance: none;
	outline: none;
}
.caret {
	width: 2px;
	height: 20px;
	margin-left: 1px;
	background: #000;
}
.drop {
	width: 25px;
	height: 25px;
}
.btns {
	display: flex;
	gap: 11px;
	margin-top: 8px;
}
.btn {
	width: 119px;
	height: 34px;
	border: 2px solid;
	border-color: #fff #555 #555 #fff;
	white-space: nowrap;
}
.btn.zh {
	font-family: "Noto Sans CJK SC", sans-serif;
	font-size: 19px;
}
.btn.wide {
	width: 154px;
}
.btn.default {
	border-color: #000;
	box-shadow: inset 2px 2px #fff, inset -2px -2px #666;
}
.btn:disabled, .dim {
	color: #8c8a86;
	text-shadow: 1px 1px #fff;
}
.check {
	display: flex;
	align-items: center;
	gap: 8px;
	white-space: nowrap;
}
.check input {
	appearance: none;
	flex: none;
	width: 19px;
	height: 19px;
	background: #fff;
	border: 2px solid;
	border-color: #666 #f4f2ee #f4f2ee #666;
}
.check input[type="radio"] {
	width: 18px;
	height: 18px;
	border-radius: 50%;
}
.check input:checked {
	background: radial-gradient(#000 3px, #fff 4px);
}
.check input:disabled {
	background: #d4d0c8;
}
.page > .unlock {
	margin: 33px 0 29px;
}
.options {
	display: flex;
	height: 117px;
	margin-top: 4px;
	border: 3px solid;
	border-color: #666 #fff #fff #666;
}
.optlist {
	flex: 1;
	padding: 3px 0 0 17px;
}
.optlist .check {
	height: 27px;
	gap: 4px;
}
.vscroll {
	flex-direction: column;
	width: 26px;
}
.vscroll .sbtn { height: 25px; }
.vscroll .thumb {
	height: 22px;
	margin: auto 0 12px;
}
fieldset {
	min-width: 0;
	height: 103px;
	margin: 13px 0 0;
	padding: 5px 18px 0 20px;
	border: 2px solid #9a9893;
}
legend {
	margin-left: -11px;
	padding: 0 4px 0 2px;
}
.after {
	display: flex;
	align-items: center;
	gap: 11px;
	height: 31px;
}
.after .field {
	flex: 1;
}
.after select {
	font-size: 17px;
	color: #8c8a86;
	opacity: 1;
}
.dim-arrow {
	fill: #8c8a86;
}
.footer {
	display: flex;
	justify-content: flex-end;
	gap: 9px;
	margin: 9px 8px 0;
}
.mark {
	position: absolute;
	left: 30px;
	top: 333px;
	pointer-events: none;
}
```
